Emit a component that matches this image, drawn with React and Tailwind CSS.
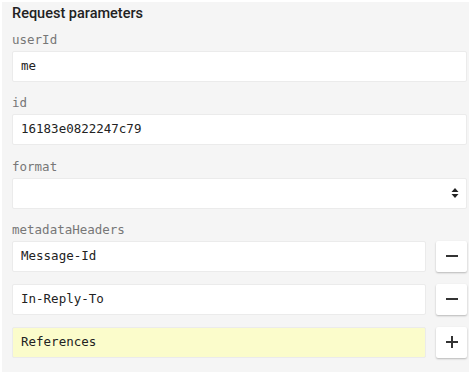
import React from "react";

const mono = { fontFamily: '"DejaVu Sans Mono", "Liberation Mono", monospace' };

function Label({ children }) {
  return (
    <div
      className="h-[20px] leading-[20px] text-[12.5px] text-[#777777] mb-[1px]"
      style={mono}
    >
      {children}
    </div>
  );
}

function Input({ value, yellow }) {
  return (
    <div
      className={`h-[31px] flex items-center px-[8px] text-[12.5px] text-[#222222] rounded-[2px] border border-[#ebebeb] ${
        yellow ? "bg-[#fbfccb]" : "bg-white"
      } flex-1`}
      style={mono}
    >
      {value}
    </div>
  );
}

function Btn({ plus }) {
  return (
    <div className="w-[31px] h-[31px] bg-white rounded-[2px] shadow-[0_1px_2px_rgba(0,0,0,0.25)] flex items-center justify-center shrink-0">
      <svg width="14" height="14" viewBox="0 0 14 14">
        <rect x="1" y="6" width="12" height="2" fill="#333" />
        {plus && <rect x="6" y="1" width="2" height="12" fill="#333" />}
      </svg>
    </div>
  );
}

export default function App() {
  return (
    <div className="w-[474px] h-[375px] bg-white pt-[2px] pl-[2px]">
      <div className="w-[467px] bg-[#f5f5f5] pl-[10px] pr-[2px] pt-[2px] pb-[14px]">
        <div
          className="h-[20px] leading-[20px] text-[14.5px] font-medium text-[#222222] mb-[6px]"
          style={{ fontFamily: "Roboto, Arial, sans-serif" }}
        >
          Request parameters
        </div>

        <div className="flex flex-col gap-[11.3px]">
          <div>
            <Label>userId</Label>
            <div className="flex">
              <Input value="me" />
            </div>
          </div>
          <div>
            <Label>id</Label>
            <div className="flex">
              <Input value="16183e0822247c79" />
            </div>
          </div>
          <div>
            <Label>format</Label>
            <div className="h-[31px] flex items-center justify-end pr-[7px] bg-white rounded-[2px] border border-[#ebebeb]">
              <svg width="8" height="12" viewBox="0 0 8 12">
                <path d="M4 1 L7.5 5 L0.5 5 Z" fill="#222" />
                <path d="M4 11 L7.5 7 L0.5 7 Z" fill="#222" />
              </svg>
            </div>
          </div>
          <div>
            <Label>metadataHeaders</Label>
            <div className="flex flex-col gap-[12px]">
              <div className="flex gap-[10px]">
                <Input value="Message-Id" />
                <Btn />
              </div>
              <div className="flex gap-[10px]">
                <Input value="In-Reply-To" />
                <Btn />
              </div>
              <div className="flex gap-[10px]">
                <Input value="References" yellow />
                <Btn plus />
              </div>
            </div>
          </div>
        </div>
      </div>
    </div>
  );
}
